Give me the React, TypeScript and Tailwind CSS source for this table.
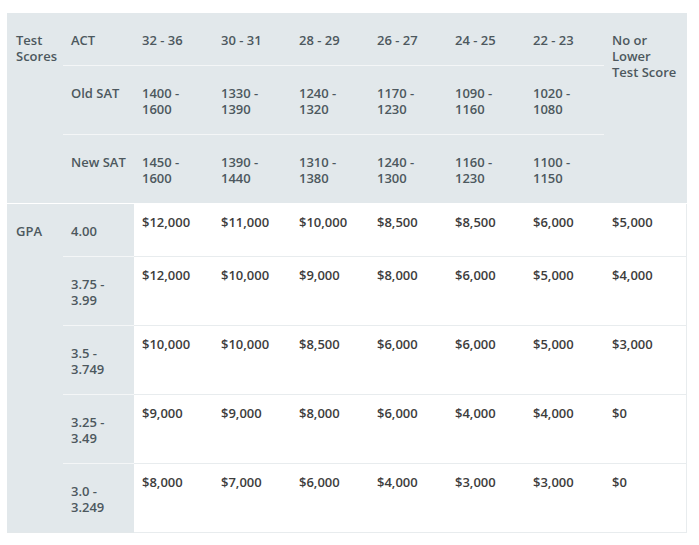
import React from "react";

const cols = ["32 - 36", "30 - 31", "28 - 29", "26 - 27", "24 - 25", "22 - 23"];
const oldSat = ["1400 - 1600", "1330 - 1390", "1240 - 1320", "1170 - 1230", "1090 - 1160", "1020 - 1080"];
const newSat = ["1450 - 1600", "1390 - 1440", "1310 - 1380", "1240 - 1300", "1160 - 1230", "1100 - 1150"];

const rows = [
  { gpa: "4.00", vals: ["$12,000", "$11,000", "$10,000", "$8,500", "$8,500", "$6,000", "$5,000"] },
  { gpa: "3.75 - 3.99", vals: ["$12,000", "$10,000", "$9,000", "$8,000", "$6,000", "$5,000", "$4,000"] },
  { gpa: "3.5 - 3.749", vals: ["$10,000", "$10,000", "$8,500", "$6,000", "$6,000", "$5,000", "$3,000"] },
  { gpa: "3.25 - 3.49", vals: ["$9,000", "$9,000", "$8,000", "$6,000", "$4,000", "$4,000", "$0"] },
  { gpa: "3.0 - 3.249", vals: ["$8,000", "$7,000", "$6,000", "$4,000", "$3,000", "$3,000", "$0"] },
];

const th = "bg-[#e2e8eb] text-left align-top font-semibold text-[#4d585e] pt-[19px] pb-[17px] px-2";

export default function App() {
  return (
    <div className="bg-white min-h-screen pt-[13px] pl-[7px]" style={{ fontFamily: '"Open Sans", "Liberation Sans", sans-serif' }}>
      <table className="table-fixed w-[680px] border-separate border-spacing-0 text-[13px] leading-4">
        <colgroup>
          <col className="w-[56px]" />
          <col className="w-[71px]" />
          <col className="w-[79px]" />
          <col className="w-[78px]" />
          <col className="w-[78px]" />
          <col className="w-[78px]" />
          <col className="w-[78px]" />
          <col className="w-[79px]" />
          <col className="w-[83px]" />
        </colgroup>
        <thead>
          <tr>
            <th rowSpan={3} className={`${th} pl-[9px] border-b border-white`}>Test Scores</th>
            <th className={`${th} border-b border-[#f4f6f7]`}>ACT</th>
            {cols.map((c) => (
              <th key={c} className={`${th} border-b border-[#f4f6f7]`}>{c}</th>
            ))}
            <th rowSpan={3} className={`${th} border-b border-white`}>No or Lower Test Score</th>
          </tr>
          <tr>
            <th className={`${th} border-b border-[#f4f6f7]`}>Old SAT</th>
            {oldSat.map((c) => (
              <th key={c} className={`${th} border-b border-[#f4f6f7]`}>{c}</th>
            ))}
          </tr>
          <tr>
            <th className={`${th} border-b border-white`}>New SAT</th>
            {newSat.map((c) => (
              <th key={c} className={`${th} border-b border-white`}>{c}</th>
            ))}
          </tr>
        </thead>
        <tbody>
          {rows.map((r, i) => (
            <tr key={r.gpa}>
              {i === 0 && (
                <th rowSpan={5} className={`${th} pl-[9px] border-b border-[#e3e8ea]`}>GPA</th>
              )}
              <th className={`${th} border-b ${i === 4 ? "border-[#e3e8ea]" : "border-[#f4f6f7]"}`}>{r.gpa}</th>
              {r.vals.map((v, j) => (
                <td
                  key={j}
                  className={`bg-white align-top font-semibold text-[#3d3d3d] pt-[10px] px-2 border-b border-[#e8ecee] ${j === 6 ? "border-r" : ""}`}
                >
                  {v}
                </td>
              ))}
            </tr>
          ))}
        </tbody>
      </table>
    </div>
  );
}
